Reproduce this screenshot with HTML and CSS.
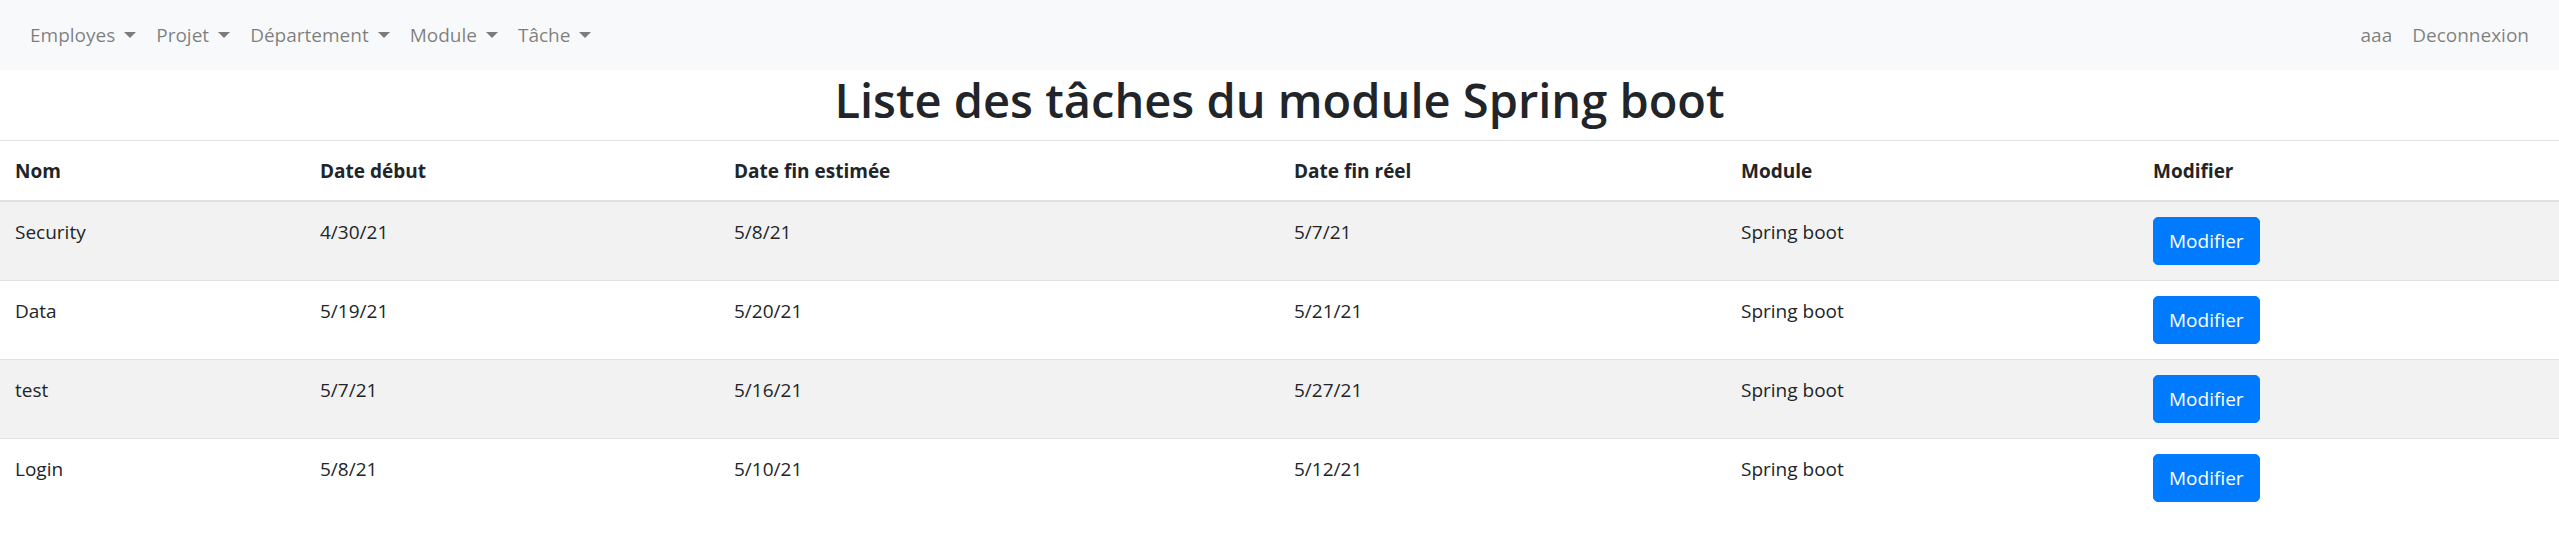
FILE: index.html
```html
<!DOCTYPE html>
<html lang="fr">
<head>
<meta charset="utf-8">
<title>Liste des tâches</title>
<link rel="stylesheet" href="styles.css">
</head>
<body>
<nav class="navbar">
  <ul class="nav-list">
    <li><a class="nav-link dropdown">Employes</a></li>
    <li><a class="nav-link dropdown">Projet</a></li>
    <li><a class="nav-link dropdown">Département</a></li>
    <li><a class="nav-link dropdown">Module</a></li>
    <li><a class="nav-link dropdown">Tâche</a></li>
  </ul>
  <ul class="nav-list">
    <li><a class="nav-link">aaa</a></li>
    <li><a class="nav-link">Deconnexion</a></li>
  </ul>
</nav>
<h1 class="title">Liste des tâches du module Spring boot</h1>
<table class="table">
  <colgroup>
    <col class="c1"><col class="c2"><col class="c3"><col class="c4"><col class="c5"><col class="c6">
  </colgroup>
  <thead>
    <tr><th>Nom</th><th>Date début</th><th>Date fin estimée</th><th>Date fin réel</th><th>Module</th><th>Modifier</th></tr>
  </thead>
  <tbody>
    <tr class="odd"><td>Security</td><td>4/30/21</td><td>5/8/21</td><td>5/7/21</td><td>Spring boot</td><td><button class="btn">Modifier</button></td></tr>
    <tr><td>Data</td><td>5/19/21</td><td>5/20/21</td><td>5/21/21</td><td>Spring boot</td><td><button class="btn">Modifier</button></td></tr>
    <tr class="odd"><td>test</td><td>5/7/21</td><td>5/16/21</td><td>5/27/21</td><td>Spring boot</td><td><button class="btn">Modifier</button></td></tr>
    <tr><td>Login</td><td>5/8/21</td><td>5/10/21</td><td>5/12/21</td><td>Spring boot</td><td><button class="btn">Modifier</button></td></tr>
  </tbody>
</table>
</body>
</html>
```
FILE: styles.css
```css
html, body {
  margin: 0;
  padding: 0;
  background: #fff;
}
body {
  font-family: "Open Sans", "Noto Sans", sans-serif;
  font-size: 19px;
  line-height: 30px;
  color: #212529;
}
.navbar {
  display: flex;
  justify-content: space-between;
  align-items: center;
  background: #f8f9fa;
  padding: 10px 20px;
  height: 50px;
}
.nav-list {
  display: flex;
  list-style: none;
  margin: 0;
  padding: 0;
}
.nav-link {
  display: block;
  padding: 10px 10px;
  color: rgba(0, 0, 0, 0.5);
  text-decoration: none;
  cursor: pointer;
}
.dropdown::after {
  content: "";
  display: inline-block;
  margin-left: 9px;
  vertical-align: 4px;
  border-top: 6px solid;
  border-right: 6px solid transparent;
  border-left: 6px solid transparent;
  border-bottom: 0;
}
.title {
  margin: 0 0 10px;
  text-align: center;
  font-size: 47px;
  font-weight: 600;
  line-height: 60px;
  color: #212529;
}
.table {
  width: 100%;
  border-collapse: collapse;
  table-layout: fixed;
}
.c1 { width: 305px; }
.c2 { width: 414px; }
.c3 { width: 560px; }
.c4 { width: 447px; }
.c5 { width: 412px; }
.table th, .table td {
  padding: 15px;
  text-align: left;
  vertical-align: top;
  border-top: 1px solid #dee2e6;
}
.table th {
  font-weight: 700;
  border-bottom: 2px solid #dee2e6;
}
.table thead tr th {
  padding-top: 15px;
  padding-bottom: 14px;
}
.odd {
  background: rgba(0, 0, 0, 0.05);
}
.btn {
  font-family: inherit;
  font-size: 19px;
  line-height: 30px;
  color: #fff;
  background: #007bff;
  border: 1px solid #007bff;
  border-radius: 5px;
  padding: 8px 15px;
  cursor: pointer;
}
```
